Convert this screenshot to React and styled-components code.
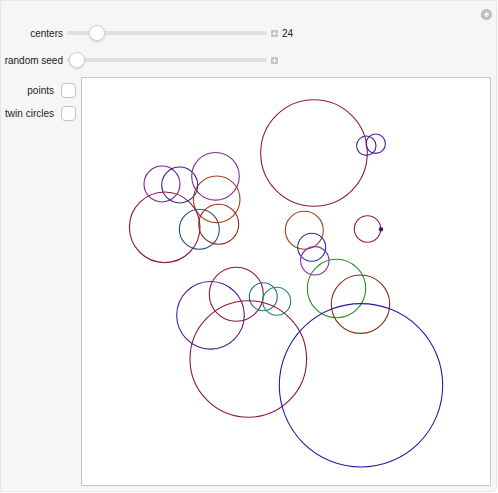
import styled, { createGlobalStyle } from "styled-components";

const GlobalStyle = createGlobalStyle`
  html, body {
    margin: 0;
    padding: 0;
    background: #ffffff;
  }
  body {
    font-family: "Liberation Sans", Arial, sans-serif;
  }
`;

const circles = [
  { x: 314, y: 153, r: 53.3, c: "#8e1c3c" },
  { x: 366.3, y: 145.7, r: 9.7, c: "#3b2a9e" },
  { x: 375.7, y: 143.7, r: 9.7, c: "#4a1fa0" },
  { x: 162, y: 184, r: 18, c: "#7d2090" },
  { x: 179.7, y: 185, r: 18, c: "#22308a" },
  { x: 215.5, y: 176.3, r: 23.8, c: "#8a2aa0" },
  { x: 216.7, y: 199.3, r: 23.3, c: "#a04020" },
  { x: 164.7, y: 227.3, r: 35.3, c: "#8c1a48" },
  { x: 199.3, y: 229.2, r: 20, c: "#1f5080" },
  { x: 218.7, y: 224.3, r: 20, c: "#8a2a12" },
  { x: 304.3, y: 230.3, r: 19, c: "#a0401c" },
  { x: 311.7, y: 247.3, r: 14, c: "#2035a0" },
  { x: 314.8, y: 260.8, r: 14.2, c: "#8a30b0" },
  { x: 367.5, y: 229, r: 13.2, c: "#901a50" },
  { x: 210.5, y: 315.3, r: 33.8, c: "#4a1a9a" },
  { x: 236.3, y: 294.3, r: 27, c: "#8c1a3a" },
  { x: 263.3, y: 296.7, r: 14, c: "#1f6a8a" },
  { x: 276.7, y: 301.3, r: 14, c: "#1a8a68" },
  { x: 248.3, y: 359, r: 58.3, c: "#8c1a3a" },
  { x: 336.5, y: 288.5, r: 29.2, c: "#2a8c2a" },
  { x: 360.5, y: 304.2, r: 29.2, c: "#8c2a1a" },
  { x: 361, y: 385.3, r: 81.7, c: "#2a1aa0" },
];

const sliders = [
  { label: "centers", value: 24, min: 2, max: 200, show: true },
  { label: "random seed", value: 1, min: 1, max: 100, show: false },
];

const toggles = ["points", "twin circles"];

function PlusBox() {
  return (
    <Plus>
      <svg width="7" height="7" viewBox="0 0 7 7">
        <path d="M3.5 1.5v4M1.5 3.5h4" stroke="#fff" strokeWidth="1.2" />
      </svg>
    </Plus>
  );
}

function Slider({ label, value, min, max, show }) {
  const pos = 10 + ((value - min) / (max - min)) * 180;
  return (
    <Row>
      <Label>{label}</Label>
      <Track>
        <Thumb style={{ left: pos - 8 }} />
      </Track>
      <PlusBox />
      {show && <Value>{value}</Value>}
    </Row>
  );
}

export default function App() {
  return (
    <>
      <GlobalStyle />
      <Panel>
        <Corner>
          <svg width="11" height="11" viewBox="0 0 11 11">
            <circle cx="5.5" cy="5.5" r="5.5" fill="#bdbdbd" />
            <path d="M5.5 2.8v5.4M2.8 5.5h5.4" stroke="#fff" strokeWidth="1.6" />
          </svg>
        </Corner>
        <Controls>
          {sliders.map((s) => (
            <Slider key={s.label} {...s} />
          ))}
        </Controls>
        <Body>
          <Side>
            {toggles.map((t) => (
              <Toggle key={t}>
                <SmallLabel>{t}</SmallLabel>
                <Box />
              </Toggle>
            ))}
          </Side>
          <Plot>
            <svg width="408" height="407" viewBox="82 78 408 407">
              {circles.map((c, i) => (
                <circle
                  key={i}
                  cx={c.x}
                  cy={c.y}
                  r={c.r}
                  fill="none"
                  stroke={c.c}
                  strokeWidth="1.1"
                />
              ))}
              <circle cx="381" cy="229.3" r="2.2" fill="#3a1a80" />
            </svg>
          </Plot>
        </Body>
      </Panel>
    </>
  );
}

const Panel = styled.div`
  position: relative;
  box-sizing: border-box;
  width: 497px;
  height: 492px;
  background: #f6f6f6;
  border: 1px solid #e6e6e6;
  border-radius: 0 0 5px 0;
  padding-top: 21px;
`;

const Corner = styled.div`
  position: absolute;
  top: 8px;
  right: 4px;
  line-height: 0;
`;

const Controls = styled.div`
  display: flex;
  flex-direction: column;
  gap: 5px;
`;

const Row = styled.div`
  display: flex;
  align-items: center;
  height: 22px;
`;

const Label = styled.div`
  width: 62px;
  text-align: right;
  font-size: 10px;
  color: #222;
  margin-right: 4px;
`;

const Track = styled.div`
  position: relative;
  width: 200px;
  height: 4px;
  border-radius: 2px;
  background: #e0e0e0;
`;

const Thumb = styled.div`
  position: absolute;
  top: -6px;
  width: 16px;
  height: 16px;
  box-sizing: border-box;
  border-radius: 50%;
  background: #ffffff;
  border: 1px solid #d4d4d4;
  box-shadow: 0 1px 2px rgba(0, 0, 0, 0.15);
`;

const Plus = styled.div`
  width: 7px;
  height: 7px;
  margin-left: 4px;
  background: #c4c4c4;
  border-radius: 1px;
  line-height: 0;
`;

const Value = styled.div`
  margin-left: 4px;
  font-size: 10px;
  color: #222;
`;

const Body = styled.div`
  display: flex;
  margin-top: 6px;
`;

const Side = styled.div`
  width: 75px;
  padding-top: 6px;
  display: flex;
  flex-direction: column;
  gap: 8px;
`;

const Toggle = styled.div`
  display: flex;
  align-items: center;
  justify-content: flex-end;
  gap: 7px;
`;

const SmallLabel = styled.div`
  font-size: 10px;
  color: #222;
`;

const Box = styled.div`
  box-sizing: border-box;
  width: 15px;
  height: 15px;
  border-radius: 4px;
  border: 1px solid #c2c2c2;
  background: #ffffff;
`;

const Plot = styled.div`
  box-sizing: border-box;
  width: 410px;
  height: 409px;
  margin-left: 5px;
  border: 1px solid #c6c6c6;
  background: #ffffff;
  line-height: 0;
`;
